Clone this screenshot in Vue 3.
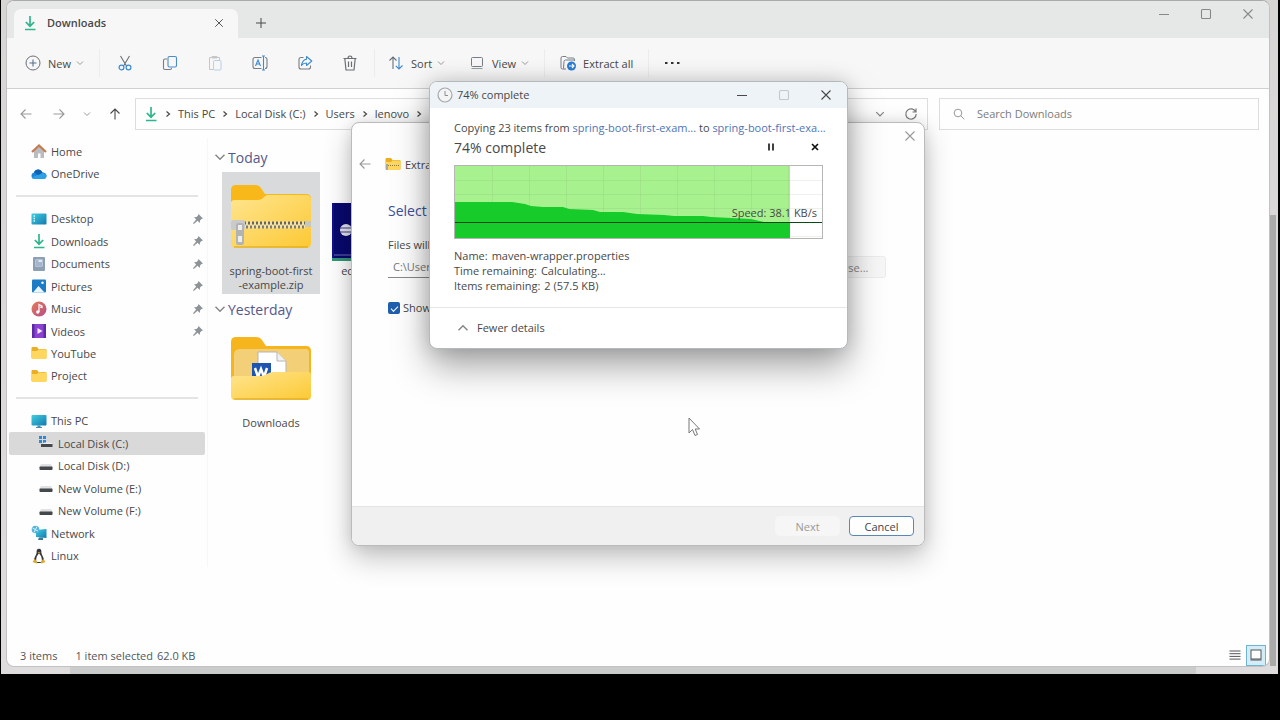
<template>
  <div class="desktop">
    <!-- shared icon shapes -->
    <svg class="sprite" width="0" height="0" aria-hidden="true">
      <defs>
        <linearGradient id="g-folder" x1="0" y1="0" x2="1" y2="1">
          <stop offset="0" stop-color="#ffe58f" />
          <stop offset="1" stop-color="#fcc934" />
        </linearGradient>
        <linearGradient id="g-screen" x1="0" y1="0" x2="1" y2="1">
          <stop offset="0" stop-color="#3fd0e0" />
          <stop offset="1" stop-color="#1478b0" />
        </linearGradient>
        <linearGradient id="g-music" x1="0" y1="0" x2="1" y2="1">
          <stop offset="0" stop-color="#e8795a" />
          <stop offset="1" stop-color="#b54c86" />
        </linearGradient>
      </defs>
      <symbol id="i-close" viewBox="0 0 12 12"><path d="M1.5 1.5l9 9M10.5 1.5l-9 9" fill="none" stroke="currentColor" stroke-width="1.1" /></symbol>
      <symbol id="i-min" viewBox="0 0 12 12"><path d="M1 6.5h10" stroke="currentColor" stroke-width="1.1" /></symbol>
      <symbol id="i-max" viewBox="0 0 12 12"><rect x="1.5" y="1.5" width="9" height="9" rx="1" fill="none" stroke="currentColor" stroke-width="1.1" /></symbol>
      <symbol id="i-down" viewBox="0 0 8 8"><path d="M1 2.5l3 3 3-3" fill="none" stroke="currentColor" /></symbol>
      <symbol id="i-left" viewBox="0 0 14 14"><path d="M12.500 7H2M6.500 2.500L2 7l4.500 4.500" fill="none" stroke="currentColor" stroke-width="1.1" /></symbol>
      <symbol id="i-crumb" viewBox="0 0 6 8"><path d="M1.5 1.5L4.5 4l-3 2.500" fill="none" stroke="currentColor" stroke-width="1.2" /></symbol>
      <symbol id="i-downloads" viewBox="0 0 14 16"><path d="M7 1v10M2.800 7L7 11.200 11.200 7M2 14.500h10.500" fill="none" stroke="#2fb58c" stroke-width="1.700" /></symbol>
      <symbol id="i-home" viewBox="0 0 16 16">
        <path d="M3 7v8h4v-4.500h2.500V15H13V7L8 3z" fill="#b9bcc0" />
        <path d="M1 9l7-6.500L15 9" fill="none" stroke="#c67a4f" stroke-width="2.200" />
      </symbol>
      <symbol id="i-onedrive" viewBox="0 0 16 16">
        <path d="M3.500 13a3.300 3.300 0 0 1-.5-6.500C4 3 9.500 2 11.500 6.500a3.300 3.300 0 0 1 1.300 6.500z" fill="#1a86d8" />
        <path d="M1 11.500C4 9.500 8 9 12 7q3.500.5 3.500 3.300Q15.200 13 12.800 13H3.500Q1.500 13 1 11.500z" fill="#2f9fe6" />
        <path d="M3 6.500C4 3 9.500 2 11.500 6.500L7.500 9z" fill="#0f62b2" />
      </symbol>
      <symbol id="i-desktop" viewBox="0 0 16 16">
        <rect x="0.500" y="2.500" width="15" height="11" rx="1" fill="url(#g-screen)" />
        <path d="M2.500 5h1.500M2.500 7.500h1.500M2.500 10h1.500" stroke="#d5f7ff" stroke-width="1.300" />
      </symbol>
      <symbol id="i-documents" viewBox="0 0 16 16">
        <rect x="2" y="1" width="12" height="14" rx="1" fill="#8d9fb5" />
        <rect x="4.500" y="3.500" width="7" height="7" fill="#dfe8f2" />
        <path d="M5 5h2.500M5 7h6M5 9h6" stroke="#6b84a3" />
      </symbol>
      <symbol id="i-pictures" viewBox="0 0 16 16">
        <rect x="1" y="1.500" width="14" height="13" rx="1" fill="#1d7cc4" />
        <path d="M2 14.500l5.500-6.500 6 6.500z" fill="#e9f6ff" />
        <circle cx="11.500" cy="4.800" r="1.300" fill="#e9f6ff" />
      </symbol>
      <symbol id="i-music" viewBox="0 0 16 16">
        <circle cx="8" cy="8" r="7.500" fill="url(#g-music)" />
        <path d="M8 11V3.500l3 1.500v1.500L9 6" fill="none" stroke="#fff" stroke-width="1.200" />
        <circle cx="6.800" cy="11" r="1.700" fill="#fff" />
      </symbol>
      <symbol id="i-videos" viewBox="0 0 16 16">
        <rect x="1" y="1" width="14" height="14" rx="1" fill="#8b42cf" />
        <path d="M1 1h2.500v14H1zM12.500 1H15v14h-2.500z" fill="#5b2aa5" />
        <path d="M6.500 5l5 3-5 3z" fill="#f6eaff" />
      </symbol>
      <symbol id="i-folder" viewBox="0 0 16 16">
        <path d="M.5 13V3q0-1 1-1H6l1.500 2H14.500q1 0 1 1v8z" fill="#e9ae22" />
        <path d="M.5 6H6l1.500-1.500h8V13q0 1-1 1h-13q-1 0-1-1z" fill="#ffd75e" />
      </symbol>
      <symbol id="i-pc" viewBox="0 0 16 16">
        <rect x="0.500" y="2" width="15" height="10.500" rx="1" fill="url(#g-screen)" />
        <path d="M6.500 12.500h3V14H11v1H5v-1h1.500z" fill="#4a8ca8" />
      </symbol>
      <symbol id="i-windisk" viewBox="0 0 16 16">
        <path d="M1 1h3v3H1zM5 1h3v3H5zM1 5h3v3H1zM5 5h3v3H5z" fill="#2c88d8" />
        <path d="M6 7.500h7l1.500 1.500H5z" fill="#eee" />
        <path d="M3 9h11.500v3H3z" fill="#44474b" />
      </symbol>
      <symbol id="i-disk" viewBox="0 0 16 16">
        <path d="M3 6h10l1.500 3h-13z" fill="#dfe1e2" />
        <rect x="1.500" y="8.500" width="13" height="3.500" rx="0.800" fill="#44474b" />
      </symbol>
      <symbol id="i-network" viewBox="0 0 16 16">
        <path d="M5 5l10.500-1v9L5 12z" fill="url(#g-screen)" />
        <path d="M8 12.500h4v2.500H7z" fill="#3c7896" />
        <circle cx="4.500" cy="4.500" r="3.800" fill="#55b4dc" />
        <path d="M1.500 3l5.500 3M3 7.500L6 1.500" stroke="#d3f1fc" />
      </symbol>
      <symbol id="i-linux" viewBox="0 0 16 16">
        <path d="M8 .8c-2 0-2.600 1.500-2.400 4C5.400 7.500 3 9 3 12.500L5 15h6l2-2.500C13 9 10.600 7.500 10.400 4.800 10.600 2.300 10 .8 8 .8z" fill="#33363a" />
        <path d="M8 5.500c-2 1.500-3.200 4.500-2.800 8.500h5.600C11.200 10 10 7 8 5.500z" fill="#fff" />
        <path d="M6.500 4.200h3L8 5.800zM1.500 14l2.300-3.200L6.500 14.500 5.500 15.500zM14.500 14l-2.300-3.200L9.500 14.500l1 1z" fill="#dba92c" />
      </symbol>
      <symbol id="i-pin" viewBox="0 0 12 12">
        <path d="M6.500 1L11 5.500 9.500 6 8 7.500 7.800 10 5.500 7.800 1.800 11l-.8-.8L4.200 6.500 2 4.200 4.500 4 6 2.500z" fill="#8e9397" />
      </symbol>
      <symbol id="i-new" viewBox="0 0 16 16"><circle cx="8" cy="8" r="7" fill="none" stroke="#6a6f76" /><path d="M8 4.500v7M4.500 8h7" stroke="#5a6f90" stroke-width="1.100" /></symbol>
      <symbol id="i-cut" viewBox="0 0 16 16">
        <path d="M3.500 1l6 10M12.500 1l-6 10" fill="none" stroke="#6a6f76" stroke-width="1.100" />
        <circle cx="4.500" cy="12.500" r="2.400" fill="none" stroke="#3d8bd0" stroke-width="1.200" />
        <circle cx="11.500" cy="12.500" r="2.400" fill="none" stroke="#3d8bd0" stroke-width="1.200" />
      </symbol>
      <symbol id="i-copy" viewBox="0 0 16 16">
        <rect x="6" y="1.500" width="8.500" height="10.500" rx="1.500" fill="none" stroke="#4a8cc9" stroke-width="1.100" />
        <path d="M5 4H3Q1.500 4 1.500 5.500v7.500q0 1.500 1.500 1.500h5q1.500 0 1.500-1.500" fill="none" stroke="#777d85" stroke-width="1.100" />
      </symbol>
      <symbol id="i-paste" viewBox="0 0 16 16">
        <path d="M6 14.500H2.500V2.500h10V5M5 2.500v-1h5v1.500H5z" fill="none" stroke="#c3c7ca" />
        <rect x="6.500" y="5.500" width="7.500" height="9.500" rx="1" fill="none" stroke="#b3d0e8" />
      </symbol>
      <symbol id="i-rename" viewBox="0 0 16 16">
        <path d="M9.500 2.500H3Q1 2.500 1 4.500v7q0 2 2 2h6.500M13 2.500q2 0 2 2v7q0 2-2 2" fill="none" stroke="#777d85" stroke-width="1.100" />
        <path d="M3.500 11L6 5l2.500 6M4.300 9h3.400M11.500 1v14M10 1h3M10 15h3" fill="none" stroke="#3d8bd0" stroke-width="1.100" />
      </symbol>
      <symbol id="i-share" viewBox="0 0 16 16">
        <path d="M6.500 2.500H4Q2 2.500 2 4.500V12q0 2 2 2h7.500q2 0 2-2v-1.500" fill="none" stroke="#777d85" stroke-width="1.100" />
        <path d="M9.500 1.500L14.800 6 9.500 10.500V8C7 8 5.500 9 4.500 10.500 5 7 6.500 4.500 9.500 4.200z" fill="none" stroke="#3d8bd0" stroke-linejoin="round" stroke-width="1.100" />
      </symbol>
      <symbol id="i-trash" viewBox="0 0 16 16">
        <path d="M1.500 3.500h13M6 3.500Q6 1 8 1t2 2.500M2.800 3.500l1.200 11.500h8l1.200-11.500M6.500 6.500v5.500M9.500 6.500v5.500" fill="none" stroke="#6a6f76" stroke-width="1.200" />
      </symbol>
      <symbol id="i-sort" viewBox="0 0 16 16">
        <path d="M5 14V2M1.500 5.500L5 2l3.500 3.500" fill="none" stroke="#6a6f76" stroke-width="1.100" />
        <path d="M11 2v12M7.800 10.800L11 14l3.500-3.500" fill="none" stroke="#3d8bd0" stroke-width="1.100" />
      </symbol>
      <symbol id="i-view" viewBox="0 0 16 16"><rect x="2.500" y="2.500" width="11" height="9" rx="1" fill="none" stroke="#777d85" /><path d="M2.500 13.500h11" stroke="#999fa6" /></symbol>
      <symbol id="i-extract" viewBox="0 0 16 16">
        <path d="M6 14H2.500Q1 14 1 12.500V3q0-1.500 1.500-1.500H6L7.500 3H13q1.500 0 1.500 1.500V6M3.500 13.500L4 6.500q.2-1.500 1.500-1.500H15" fill="none" stroke="#777d85" />
        <circle cx="11.500" cy="11" r="4.500" fill="#2b7cd3" />
        <path d="M9 11h5M12 9l2 2-2 2" fill="none" stroke="#fff" stroke-width="1.100" />
      </symbol>
      <symbol id="i-more" viewBox="0 0 16 16"><path d="M1 8h2.500M7 8h2.500M13 8h2.500" stroke="#333" stroke-width="2" /></symbol>
    </svg>

    <div class="backdrop">
      <div class="back-taskline"></div>
      <div class="back-scroll"></div>

      <div class="explorer">
        <header class="tabstrip">
          <div class="tab">
            <svg class="ic14 tall"><use href="#i-downloads" /></svg>
            <span class="tab-title">Downloads</span>
            <button type="button" class="icon-btn" aria-label="Close tab"><svg class="ic10"><use href="#i-close" /></svg></button>
          </div>
          <button type="button" class="icon-btn new-tab" aria-label="New tab">
            <svg class="ic10" viewBox="0 0 10 10"><path d="M5 0v10M0 5h10" stroke="currentColor" /></svg>
          </button>
          <div class="caption">
            <button type="button" class="icon-btn" aria-label="Minimize"><svg class="ic12"><use href="#i-min" /></svg></button>
            <button type="button" class="icon-btn" aria-label="Maximize"><svg class="ic12"><use href="#i-max" /></svg></button>
            <button type="button" class="icon-btn" aria-label="Close"><svg class="ic12"><use href="#i-close" /></svg></button>
          </div>
        </header>

        <div class="toolbar">
          <button type="button" class="tool new"><svg class="ic16"><use href="#i-new" /></svg>New<svg class="ic8"><use href="#i-down" /></svg></button>
          <span class="sep"></span>
          <button v-for="t in tools" :key="t" type="button" class="icon-btn tool-icon" :aria-label="t">
            <svg class="ic16"><use :href="'#i-' + t" /></svg>
          </button>
          <span class="sep"></span>
          <button type="button" class="tool"><svg class="ic16"><use href="#i-sort" /></svg>Sort<svg class="ic8"><use href="#i-down" /></svg></button>
          <button type="button" class="tool"><svg class="ic16"><use href="#i-view" /></svg>View<svg class="ic8"><use href="#i-down" /></svg></button>
          <span class="sep"></span>
          <button type="button" class="tool"><svg class="ic16"><use href="#i-extract" /></svg>Extract all</button>
          <span class="sep"></span>
          <button type="button" class="tool" aria-label="More"><svg class="ic16"><use href="#i-more" /></svg></button>
        </div>

        <div class="address-row">
          <div class="arrows">
            <button type="button" class="icon-btn dim back" aria-label="Back"><svg class="ic14"><use href="#i-left" /></svg></button>
            <button type="button" class="icon-btn dim" aria-label="Forward"><svg class="ic14 flip"><use href="#i-left" /></svg></button>
            <button type="button" class="icon-btn dim" aria-label="Recent"><svg class="ic8"><use href="#i-down" /></svg></button>
            <button type="button" class="icon-btn" aria-label="Up"><svg class="ic14 up"><use href="#i-left" /></svg></button>
          </div>
          <nav class="address">
            <svg class="ic14 tall"><use href="#i-downloads" /></svg>
            <template v-for="c in crumbs" :key="c">
              <svg class="crumb-sep"><use href="#i-crumb" /></svg>
              <a href="#">{{ c }}</a>
            </template>
            <svg class="crumb-sep"><use href="#i-crumb" /></svg>
            <button type="button" class="icon-btn first" aria-label="Previous locations"><svg class="ic10"><use href="#i-down" /></svg></button>
            <button type="button" class="icon-btn" aria-label="Refresh">
              <svg class="ic14" viewBox="0 0 14 14"><path d="M11.800 5A5.200 5.200 0 1 0 12.200 7M12 1.500V5H8.500" fill="none" stroke="#777" stroke-width="1.200" /></svg>
            </button>
          </nav>
          <label class="search">
            <svg class="ic12" viewBox="0 0 12 12"><circle cx="5" cy="5" r="3.800" fill="none" stroke="#999" /><path d="M7.800 7.800l3.500 3.500" stroke="#999" /></svg>
            <input type="text" placeholder="Search Downloads" aria-label="Search Downloads" />
          </label>
        </div>

        <div class="body">
          <nav class="sidebar">
            <template v-for="(n, i) in places" :key="i">
              <hr v-if="!n.label" />
              <a v-else href="#" :class="{ sub: n.sub, selected: n.selected }">
                <svg class="ic16"><use :href="'#i-' + n.icon" /></svg>
                <span>{{ n.label }}</span>
                <svg v-if="n.pinned" class="ic12 pin"><use href="#i-pin" /></svg>
              </a>
            </template>
          </nav>

          <main class="files">
            <button type="button" class="group"><svg class="ic12"><use href="#i-down" /></svg>Today</button>
            <div class="tiles">
              <div class="tile selected">
                <svg class="thumb" viewBox="0 0 80 64">
                  <path d="M0 59V5q0-5 5-5h19q4 0 6 3l4 6h41q5 0 5 5v20H0z" fill="#f9b81a" />
                  <path d="M0 18q0-3 4-3h23q4 0 6-3l3-2h39q5 0 5 5v43q0 5-5 5H5q-5 0-5-5z" fill="url(#g-folder)" />
                  <path d="M3 62h74" stroke="#d8a21c" stroke-opacity=".5" stroke-width="2" />
                  <path d="M8 40h66" stroke="#f4e2a4" stroke-width="7" />
                  <path d="M13 38h62" stroke="#66635a" stroke-width="3" stroke-dasharray="2 2" />
                  <path d="M15 42h60" stroke="#807a68" stroke-width="3" stroke-dasharray="2 2" />
                  <rect x="74" y="36" width="6" height="6" rx="1" fill="#c6c6c2" />
                  <rect x="0" y="35" width="14" height="10" rx="2" fill="#c9caca" />
                  <rect x="5" y="38" width="8" height="22" rx="2" fill="#b2b4b4" />
                  <path d="M7 40h4v5H7zM7 51h4v6H7z" fill="#ededea" />
                </svg>
                <span>spring-boot-first<br />-example.zip</span>
              </div>
              <div class="tile">
                <svg class="thumb wide" viewBox="0 0 98 64">
                  <rect x="0" y="18" width="98" height="58" fill="#09096e" />
                  <rect x="0" y="18" width="2" height="55" fill="#10108c" />
                  <rect x="0" y="73" width="98" height="3" fill="#319675" />
                  <circle cx="14" cy="45" r="6" fill="#e4e4ee" />
                  <path d="M8 43h13M8 47h13" stroke="#3b3b86" />
                  <path d="M2 70h40" stroke="#6e6eb5" />
                </svg>
                <span>eclipse-installer</span>
              </div>
            </div>
            <button type="button" class="group"><svg class="ic12"><use href="#i-down" /></svg>Yesterday</button>
            <div class="tiles">
              <div class="tile">
                <svg class="thumb" viewBox="0 0 80 64">
                  <path d="M0 59V5q0-5 5-5h20q4 0 6 3l4 6h40q5 0 5 5v40H0z" fill="#f6b51d" />
                  <path d="M3 18q0-6 6-6h66q3 0 3 4v24H3z" fill="#f3d078" />
                  <path d="M27 15h19l9 9v22H27z" fill="#fff" stroke="#b5b5b5" />
                  <path d="M46 15v9h9" fill="#f1f1f1" stroke="#b5b5b5" />
                  <rect x="21" y="26" width="19" height="20" fill="#1d55b0" />
                  <path d="M24 31l3 9 3-8 3 8 3-9" fill="none" stroke="#fff" stroke-width="2.500" />
                  <path d="M0 42q0-3 3-3h26q4 0 7-2 3-2 6-2h35q3 0 3 3v21q0 4-4 4H4q-4 0-4-4z" fill="url(#g-folder)" />
                  <path d="M3 62h74" stroke="#d8a21c" stroke-opacity=".5" stroke-width="2" />
                </svg>
                <span>Downloads</span>
              </div>
            </div>
          </main>
        </div>

        <footer class="status">
          <span>3 items</span>
          <span class="picked">1 item selected</span>
          <span>62.0 KB</span>
          <div class="views">
            <button type="button" class="icon-btn" aria-label="Details view">
              <svg class="ic12" viewBox="0 0 12 12"><path d="M.5 2h11M.5 4.700h11M.5 7.400h11M.5 10.100h11" stroke="#555" /></svg>
            </button>
            <button type="button" class="icon-btn active" aria-label="Large icons view">
              <svg class="ic12" viewBox="0 0 12 12"><rect x="1" y="1" width="10" height="9" fill="#fff" stroke="#555" /><path d="M.5 11h11" stroke="#555" /></svg>
            </button>
          </div>
        </footer>
      </div>
    </div>

    <!-- extract wizard -->
    <section class="wizard">
      <button type="button" class="icon-btn wizard-close" aria-label="Close"><svg class="ic12"><use href="#i-close" /></svg></button>
      <div class="wizard-title">
        <button type="button" class="icon-btn dim" aria-label="Back"><svg class="ic14"><use href="#i-left" /></svg></button>
        <svg class="ic16" viewBox="0 0 16 16">
          <use href="#i-folder" />
          <path d="M1 9.500h14" stroke="#8b7a45" stroke-dasharray="1 1" />
          <path d="M1 8h2v6H1z" fill="#a9a9a4" />
        </svg>
        <span>Extract Compressed (Zipped) Folders</span>
      </div>
      <div class="wizard-body">
        <h2>Select a Destination and Extract Files</h2>
        <label for="dest">Files will</label>
        <div class="dest-row">
          <input id="dest" v-model="dest" type="text" />
          <button type="button" class="browse">Browse...</button>
        </div>
        <label class="check"><input v-model="showFiles" type="checkbox" />Show extracted files when complete</label>
      </div>
      <footer>
        <button type="button" class="next" disabled>Next</button>
        <button type="button" class="cancel">Cancel</button>
      </footer>
    </section>

    <!-- copy progress -->
    <section class="progress">
      <header>
        <svg class="ic16" viewBox="0 0 16 16"><circle cx="8" cy="8" r="7" fill="#f4f4f4" stroke="#a4a8ac" stroke-width="1.200" /><path d="M8 4v4.500h3" fill="none" stroke="#8a8e92" /></svg>
        <span>74% complete</span>
        <button type="button" class="icon-btn" aria-label="Minimize"><svg class="ic12"><use href="#i-min" /></svg></button>
        <button type="button" class="icon-btn off" aria-label="Maximize" disabled><svg class="ic12"><use href="#i-max" /></svg></button>
        <button type="button" class="icon-btn" aria-label="Close"><svg class="ic12"><use href="#i-close" /></svg></button>
      </header>
      <div class="progress-body">
        <p class="line">Copying 23 items from <a href="#">spring-boot-first-exam...</a> to <a href="#">spring-boot-first-exa...</a></p>
        <div class="headline">
          <span>74% complete</span>
          <button type="button" class="icon-btn" aria-label="Pause"><svg class="ic8" viewBox="0 0 8 8"><path d="M2 .5v7M6 .5v7" stroke="#111" stroke-width="1.600" /></svg></button>
          <button type="button" class="icon-btn" aria-label="Cancel"><svg class="ic8" viewBox="0 0 8 8"><path d="M1 1l6 6M7 1L1 7" stroke="#111" stroke-width="1.700" /></svg></button>
        </div>
        <div class="chart">
          <svg viewBox="0 0 367 72" preserveAspectRatio="none">
            <rect x="0" y="0" width="335" height="72" fill="#a8f18f" />
            <path :d="grid" stroke="#7a9a70" stroke-opacity=".14" />
            <path :d="speedArea" fill="#17cb2a" />
            <path d="M0 56.500h367" stroke="#0b4a12" />
          </svg>
          <span>Speed: 38.1 KB/s</span>
        </div>
        <dl>
          <div v-for="d in details" :key="d.k"><dt>{{ d.k }}:</dt><dd>{{ d.v }}</dd></div>
        </dl>
      </div>
      <footer>
        <button type="button" class="fewer"><svg class="ic12 turned"><use href="#i-down" /></svg>Fewer details</button>
      </footer>
    </section>

    <svg class="cursor" viewBox="0 0 12 20"><path d="M1 1v15l3.500-3.500L7 18.500l2.500-1L7.200 12H11.500z" fill="#fff" stroke="#777" /></svg>
  </div>
</template>

<script setup>
import { ref, computed } from "vue";

const tools = ["cut", "copy", "paste", "rename", "share", "trash"];
const crumbs = ["This PC", "Local Disk (C:)", "Users", "lenovo"];

// entries without a label are separators
const places = [
  { label: "Home", icon: "home" },
  { label: "OneDrive", icon: "onedrive" },
  {},
  { label: "Desktop", icon: "desktop", pinned: true },
  { label: "Downloads", icon: "downloads", pinned: true },
  { label: "Documents", icon: "documents", pinned: true },
  { label: "Pictures", icon: "pictures", pinned: true },
  { label: "Music", icon: "music", pinned: true },
  { label: "Videos", icon: "videos", pinned: true },
  { label: "YouTube", icon: "folder" },
  { label: "Project", icon: "folder" },
  {},
  { label: "This PC", icon: "pc" },
  { label: "Local Disk (C:)", icon: "windisk", sub: true, selected: true },
  { label: "Local Disk (D:)", icon: "disk", sub: true },
  { label: "New Volume (E:)", icon: "disk", sub: true },
  { label: "New Volume (F:)", icon: "disk", sub: true },
  { label: "Network", icon: "network" },
  { label: "Linux", icon: "linux" },
];

const dest = ref("C:\\Users\\lenovo\\Downloads\\spring-boot-first-example");
const showFiles = ref(true);

const details = [
  { k: "Name", v: "maven-wrapper.properties" },
  { k: "Time remaining", v: "Calculating..." },
  { k: "Items remaining", v: "2 (57.5 KB)" },
];

// transfer speed over progress, as [x, y] in chart units
const samples = [
  [0, 36], [57, 36], [70, 38], [76, 40], [88, 41], [108, 41], [114, 43], [138, 44],
  [145, 46], [168, 46], [182, 48], [209, 49], [219, 50], [248, 50], [256, 51], [296, 53],
  [309, 56], [335, 56],
];
const speedArea = computed(
  () => "M0 72 " + samples.map(([x, y]) => `L${x} ${y}`).join(" ") + " L335 72Z"
);

const grid = computed(() => {
  let d = "";
  for (let x = 37; x < 367; x += 37) d += `M${x}.5 0V72`;
  for (let y = 14; y < 72; y += 14) d += `M0 ${y}.5H367`;
  return d;
});
</script>

<style>
html,
body {
  margin: 0;
  background: #000;
}
</style>

<style scoped>
* {
  box-sizing: border-box;
}

.desktop {
  position: relative;
  display: flex;
  min-height: 100vh;
  padding: 0 2px 46px 1px;
  overflow: hidden;
  background: #000;
  color: #484848;
  font-family: "Open Sans", "Noto Sans", sans-serif;
  font-size: 11px;
  line-height: 15px;
}

.sprite {
  position: absolute;
}

svg {
  display: block;
  flex-shrink: 0;
}

button,
input {
  margin: 0;
  padding: 0;
  border: 0;
  background: none;
  color: inherit;
  font: inherit;
}

a {
  color: inherit;
  text-decoration: none;
}

.ic8 { width: 8px; height: 8px; }
.ic10 { width: 10px; height: 10px; }
.ic12 { width: 12px; height: 12px; }
.ic14 { width: 14px; height: 14px; }
.ic14.tall { height: 16px; }
.ic16 { width: 16px; height: 16px; }
.flip { transform: scaleX(-1); }
.up { transform: rotate(90deg); }
.turned { transform: rotate(180deg); }

.icon-btn {
  display: flex;
  align-items: center;
  justify-content: center;
}

.dim {
  color: #999;
}

/* slice of the window behind */
.backdrop {
  position: relative;
  display: flex;
  flex: 1;
  padding: 0 8px 7px 5px;
  background: linear-gradient(#d8d5d5, #dedcdc);
}

.back-taskline {
  position: absolute;
  right: 82px;
  bottom: 0;
  left: 69px;
  height: 7px;
  background: #c9cccb;
}

.back-scroll {
  position: absolute;
  top: 215px;
  right: 2px;
  bottom: 8px;
  width: 6px;
  background: #aaa;
}

.explorer {
  position: relative;
  display: flex;
  flex: 1;
  flex-direction: column;
  overflow: hidden;
  border: 1px solid #c2c2c2;
  border-top-color: #aaa;
  border-radius: 8px;
  background: #fefefe;
}

.tabstrip {
  display: flex;
  height: 37px;
  padding-left: 7px;
  background: #e6e7e7;
}

.tab {
  display: flex;
  align-items: center;
  align-self: flex-end;
  width: 224px;
  height: 29px;
  padding: 0 14px 2px 9px;
  border-radius: 7px 7px 0 0;
  background: #f7f7f7;
}

.tab-title {
  flex: 1;
  margin-left: 10px;
  font-weight: 600;
}

.new-tab {
  width: 46px;
  padding-top: 6px;
}

.caption {
  display: flex;
  height: 26px;
  margin-left: auto;
  color: #888;
}

.caption .icon-btn {
  width: 42px;
}

.toolbar {
  display: flex;
  align-items: center;
  height: 51px;
  padding-left: 18px;
  border-bottom: 1px solid #d0d0d0;
  background: #f7f7f7;
}

.tool {
  display: flex;
  align-items: center;
  gap: 7px;
  margin: 0 12px;
}

.tool .ic8 {
  margin-left: -2px;
  color: #999;
}

.tool.new {
  margin: 0 12px 0 0;
}

.tool-icon {
  width: 45px;
  height: 32px;
}

.sep {
  width: 1px;
  height: 28px;
  margin: 0 1px;
  background: #ececec;
}

.tool + .sep {
  margin: 0 3px;
}

.address-row {
  display: flex;
  align-items: center;
  height: 49px;
  padding: 0 10px 0 5px;
}

.arrows {
  display: flex;
  width: 123px;
}

.arrows .icon-btn {
  width: 28px;
}

.arrows .back {
  margin-right: 5px;
}

.address {
  display: flex;
  flex: 1;
  align-items: center;
  gap: 7px;
  height: 32px;
  padding: 0 9px 0 8px;
  border: 1px solid #ddd;
}

.crumb-sep {
  width: 6px;
  height: 8px;
}

.address .first {
  margin: 0 12px 0 auto;
  color: #888;
}

.search {
  display: flex;
  flex: 0 1 320px;
  align-items: center;
  gap: 12px;
  height: 32px;
  margin-left: 11px;
  padding-left: 13px;
  border: 1px solid #ddd;
}

.search input {
  flex: 1;
  min-width: 0;
  outline: 0;
}

.search input::placeholder {
  color: #7c7c7c;
  opacity: 1;
}

.body {
  display: flex;
  flex: 1;
}

.sidebar {
  display: grid;
  grid-auto-rows: 1fr;
  width: 201px;
  height: 429px;
  padding: 2px 4px 0 2px;
  border-right: 1px solid #f7f7f7;
}

.sidebar a {
  display: flex;
  align-items: center;
  gap: 4px;
  padding: 0 1px 0 22px;
  border-radius: 2px;
}

.sidebar .sub {
  padding-left: 29px;
}

.sidebar .selected {
  background: #d9d9d9;
}

.sidebar .pin {
  margin-left: auto;
}

.sidebar hr {
  align-self: center;
  width: 182px;
  height: 2px;
  margin: 0 7px;
  border: 0;
  background: #e4e4e4;
}

.files {
  flex: 1;
  min-width: 0;
  padding: 9px 0 0 6px;
}

.group {
  display: flex;
  align-items: center;
  gap: 2px;
  height: 20px;
  color: #55588c;
  font-size: 14px;
}

.group .ic12 {
  color: #888;
}

.tiles {
  display: flex;
  gap: 12px;
  padding: 5px 0 5px 8px;
}

.tile {
  display: flex;
  flex-direction: column;
  align-items: center;
  gap: 15px;
  width: 98px;
  height: 122px;
  padding-top: 13px;
  text-align: center;
  line-height: 14px;
}

.tile.selected {
  background: #d9dadb;
}

.thumb {
  width: 80px;
  height: 64px;
}

.thumb.wide {
  width: 98px;
  overflow: visible;
}

.status {
  display: flex;
  align-items: center;
  height: 22px;
  padding: 0 3px 0 13px;
  color: #50565a;
}

.status .picked {
  margin: 0 4px 0 18px;
}

.views {
  display: flex;
  gap: 5px;
  margin-left: auto;
}

.views .active {
  width: 20px;
  height: 21px;
  border: 1px solid #70b4d2;
  background: #d3edf8;
}

.wizard {
  position: absolute;
  top: 122px;
  left: 351px;
  display: flex;
  flex-direction: column;
  width: 574px;
  height: 424px;
  overflow: hidden;
  border: 1px solid #bbb;
  border-radius: 8px;
  background: #fefefe;
  box-shadow: 0 12px 28px rgba(0, 0, 0, 0.24), 0 0 14px rgba(0, 0, 0, 0.1);
}

.wizard-close {
  align-self: flex-end;
  width: 28px;
  height: 26px;
  color: #999;
}

.wizard-title {
  display: flex;
  align-items: center;
  height: 30px;
  padding-left: 6px;
}

.wizard-title .ic16 {
  margin: 0 4px 0 13px;
}

.wizard-body {
  flex: 1;
  padding: 22px 36px 0;
}

.wizard h2 {
  margin: 0 0 16px;
  color: #3c4f9a;
  font-size: 14px;
  font-weight: 400;
  line-height: 20px;
}

.dest-row {
  display: flex;
  gap: 8px;
  margin-top: 4px;
}

.dest-row input {
  flex: 1;
  height: 22px;
  padding: 0 5px;
  border-bottom: 1px solid #888;
  color: #777;
}

.browse {
  width: 82px;
  margin-right: 2px;
  border: 1px solid #ececec;
  border-radius: 3px;
  background: #f7f7f7;
  color: #888;
}

.check {
  display: flex;
  align-items: center;
  gap: 3px;
  margin-top: 22px;
}

.check input {
  display: grid;
  place-items: center;
  width: 12px;
  height: 12px;
  border-radius: 2px;
  background: #1f5fae;
  appearance: none;
}

.check input::after {
  width: 6px;
  height: 3px;
  border: solid #fff;
  border-width: 0 0 1px 1px;
  content: "";
  transform: rotate(-45deg);
}

.wizard footer {
  display: flex;
  align-items: center;
  justify-content: flex-end;
  gap: 9px;
  height: 39px;
  padding-right: 10px;
  border-top: 1px solid #e4e4e4;
  background: #f0f0f0;
}

.next,
.cancel {
  width: 65px;
  height: 20px;
  border: 1px solid #f5f5f5;
  border-radius: 4px;
  background: #f6f6f6;
  color: #999;
}

.cancel {
  border-color: #5b87b4;
  background: #fefefe;
  color: #444;
}

.progress {
  position: absolute;
  top: 81px;
  left: 429px;
  width: 419px;
  overflow: hidden;
  border: 1px solid #b4b9bb;
  border-radius: 8px;
  background: #fff;
  box-shadow: 0 18px 36px rgba(0, 0, 0, 0.34), 0 0 20px rgba(0, 0, 0, 0.16);
}

.progress header {
  display: flex;
  align-items: center;
  height: 26px;
  padding: 0 0 1px 7px;
  background: #edf3f6;
}

.progress header span {
  flex: 1;
  margin-left: 4px;
}

.progress header .icon-btn {
  width: 42px;
  height: 26px;
}

.progress header .off {
  color: #c4c9cb;
}

.progress-body {
  padding: 12px 24px 0;
}

.progress .line {
  margin: 0;
  white-space: nowrap;
}

.line a {
  color: #4f74b5;
}

.headline {
  display: flex;
  align-items: center;
  height: 24px;
  padding-right: 4px;
  font-size: 14px;
}

.headline span {
  flex: 1;
}

.headline .icon-btn {
  margin-left: 36px;
}

.chart {
  position: relative;
  height: 74px;
  margin: 6px 0 9px;
  border: 1px solid #b5b5b5;
}

.chart svg {
  width: 100%;
  height: 72px;
}

.chart span {
  position: absolute;
  right: 5px;
  bottom: 18px;
}

dl {
  margin: 0 0 14px;
}

dl div {
  display: flex;
  gap: 4px;
}

dt,
dd {
  margin: 0;
}

.progress footer {
  height: 41px;
  padding: 0 27px;
  border-top: 1px solid #e6e6e6;
}

.fewer {
  display: flex;
  align-items: center;
  gap: 8px;
  height: 39px;
}

.fewer .ic12 {
  color: #888;
}

.cursor {
  position: absolute;
  top: 417px;
  left: 688px;
  width: 12px;
  height: 20px;
}
</style>
